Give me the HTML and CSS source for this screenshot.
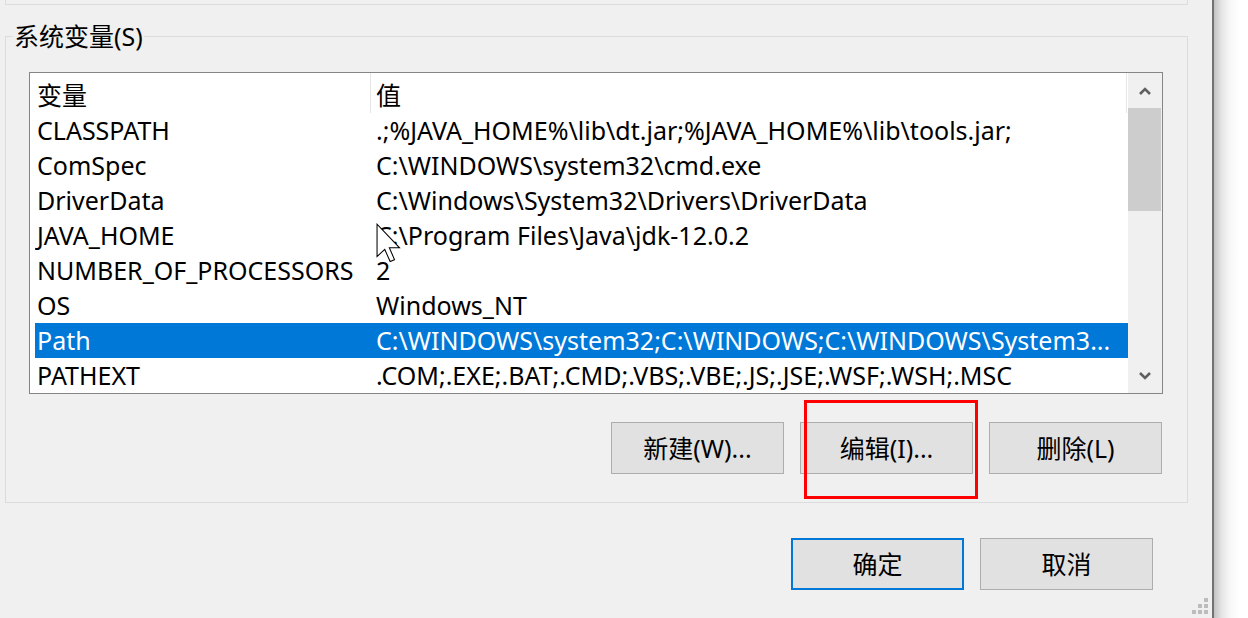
FILE: index.html
```html
<!DOCTYPE html>
<html lang="zh-CN">
<head>
<meta charset="utf-8">
<title>系统变量</title>
<link rel="stylesheet" href="styles.css">
</head>
<body>
<div class="window">
  <div class="dialog">
    <div class="prev-group"></div>
    <fieldset class="group">
      <legend class="group-title">系统变量(S)</legend>
      <div class="listview">
        <div class="list-main">
          <div class="lv-header">
            <div class="hcell hcell-name">变量</div>
            <div class="hcell hcell-value">值</div>
          </div>
          <div class="row"><div class="cell-name">CLASSPATH</div><div class="cell-value">.;%JAVA_HOME%\lib\dt.jar;%JAVA_HOME%\lib\tools.jar;</div></div>
          <div class="row"><div class="cell-name">ComSpec</div><div class="cell-value">C:\WINDOWS\system32\cmd.exe</div></div>
          <div class="row"><div class="cell-name">DriverData</div><div class="cell-value">C:\Windows\System32\Drivers\DriverData</div></div>
          <div class="row"><div class="cell-name">JAVA_HOME</div><div class="cell-value">C:\Program Files\Java\jdk-12.0.2</div></div>
          <div class="row"><div class="cell-name">NUMBER_OF_PROCESSORS</div><div class="cell-value">2</div></div>
          <div class="row"><div class="cell-name">OS</div><div class="cell-value">Windows_NT</div></div>
          <div class="row row-selected"><div class="cell-name">Path</div><div class="cell-value">C:\WINDOWS\system32;C:\WINDOWS;C:\WINDOWS\System3...</div></div>
          <div class="row"><div class="cell-name">PATHEXT</div><div class="cell-value">.COM;.EXE;.BAT;.CMD;.VBS;.VBE;.JS;.JSE;.WSF;.WSH;.MSC</div></div>
        </div>
        <div class="scrollbar">
          <div class="sb-btn">
            <svg width="12" height="8" viewBox="0 0 12 8"><polyline points="1,7 6,2 11,7" fill="none" stroke="#606060" stroke-width="2.6"/></svg>
          </div>
          <div class="sb-thumb"></div>
          <div class="sb-track"></div>
          <div class="sb-btn">
            <svg width="12" height="8" viewBox="0 0 12 8"><polyline points="1,1 6,6 11,1" fill="none" stroke="#606060" stroke-width="2.6"/></svg>
          </div>
        </div>
      </div>
      <div class="btn-row">
        <button class="btn">新建(W)...</button>
        <div class="marked"><button class="btn">编辑(I)...</button></div>
        <button class="btn">删除(L)</button>
      </div>
    </fieldset>
    <div class="dlg-buttons">
      <button class="btn btn-default">确定</button>
      <button class="btn">取消</button>
    </div>
    <svg class="grip" width="17" height="17" viewBox="0 0 17 17">
      <rect x="12" y="0" width="4" height="4" fill="#bcbcbc"/>
      <rect x="6" y="6" width="4" height="4" fill="#bcbcbc"/>
      <rect x="12" y="6" width="4" height="4" fill="#bcbcbc"/>
      <rect x="0" y="12" width="4" height="4" fill="#bcbcbc"/>
      <rect x="6" y="12" width="4" height="4" fill="#bcbcbc"/>
      <rect x="12" y="12" width="4" height="4" fill="#bcbcbc"/>
    </svg>
  </div>
  <div class="edge"></div>
  <div class="shadow"></div>
</div>
<svg class="cursor" width="25" height="40" viewBox="0 0 12 19">
  <path d="M0.5 0.5 L0.5 16 L4.2 12.6 L6.8 18.4 L8.9 17.5 L6.4 11.8 L11.3 11.8 Z" fill="#fff" stroke="#000" stroke-width="0.5" stroke-linejoin="miter"/>
</svg>
</body>
</html>
```

FILE: styles.css
```css
html, body {
  margin: 0;
  padding: 0;
}

body {
  background: #ffffff;
  font-family: "Noto Sans", "Noto Sans CJK SC", sans-serif;
  font-size: 25px;
  color: #000;
  position: relative;
  width: 1248px;
  height: 618px;
  overflow: hidden;
}

.window {
  display: flex;
  height: 618px;
}

.dialog {
  width: 1212px;
  flex: none;
  background: #f0f0f0;
  position: relative;
}

.edge {
  width: 2px;
  flex: none;
  background: #727272;
}

.shadow {
  flex: 1;
  background: linear-gradient(to right, #c2c2c2 0px, #e6e6e6 8px, #f7f7f7 16px, #ffffff 26px);
}

.prev-group {
  margin-left: 5px;
  width: 1183px;
  height: 5px;
  box-sizing: border-box;
  border: 1px solid #dcdcdc;
  border-top: none;
}

.group {
  margin: 17px 0 0 5px;
  width: 1183px;
  box-sizing: border-box;
  border: 1px solid #dcdcdc;
  padding: 0 24px 28px 23px;
  min-inline-size: auto;
}

.group-title {
  margin-left: -16px;
  padding: 0 1px;
  line-height: 28px;
  height: 28px;
  white-space: nowrap;
}

.listview {
  margin-top: 22px;
  width: 1134px;
  height: 322px;
  box-sizing: border-box;
  border: 1px solid #858585;
  background: #fff;
  display: flex;
}

.list-main {
  flex: 1;
  min-width: 0;
  display: flex;
  flex-direction: column;
}

.lv-header {
  height: 40px;
  display: flex;
}

.hcell {
  height: 40px;
  line-height: 40px;
  padding-top: 2px;
  box-sizing: border-box;
  border-right: 1px solid #e5e5e5;
  white-space: nowrap;
}

.hcell-name {
  width: 341px;
  padding-left: 7px;
}

.hcell-value {
  width: 756px;
  padding-left: 5px;
}

.row {
  display: flex;
  height: 35px;
  line-height: 35px;
  margin-left: 5px;
  width: 1093px;
  white-space: nowrap;
}

.cell-name {
  width: 335px;
  flex: none;
  box-sizing: border-box;
  padding-left: 2px;
  overflow: hidden;
}

.cell-value {
  flex: 1;
  min-width: 0;
  padding-left: 6px;
  overflow: hidden;
}

.row-selected {
  background: #0078d7;
  color: #fff;
}

.scrollbar {
  width: 34px;
  flex: none;
  background: #f0f0f0;
  display: flex;
  flex-direction: column;
}

.sb-btn {
  height: 35px;
  flex: none;
  display: flex;
  align-items: center;
  justify-content: center;
  padding-right: 1px;
}

.sb-thumb {
  height: 103px;
  flex: none;
  background: #cdcdcd;
  margin-right: 1px;
}

.sb-track {
  flex: 1;
}

.btn-row {
  margin-top: 28px;
  margin-right: 1px;
  display: flex;
  justify-content: flex-end;
  gap: 16px;
}

.btn {
  width: 173px;
  height: 52px;
  box-sizing: border-box;
  border: 1px solid #adadad;
  background: #e1e1e1;
  font-family: "Noto Sans", "Noto Sans CJK SC", sans-serif;
  font-size: 25px;
  color: #000;
  padding: 0;
  margin: 0;
  line-height: 1;
}

.btn-default {
  border: 2px solid #0078d7;
}

.marked {
  position: relative;
  display: flex;
}

.marked::after {
  content: "";
  position: absolute;
  left: 4px;
  top: -22px;
  width: 174px;
  height: 99px;
  box-sizing: border-box;
  border: 3px solid #ff0000;
  pointer-events: none;
}

.dlg-buttons {
  margin-top: 35px;
  padding-right: 59px;
  display: flex;
  justify-content: flex-end;
  gap: 16px;
}

.grip {
  position: absolute;
  right: 3px;
  bottom: 3px;
}

.cursor {
  position: absolute;
  left: 376px;
  top: 223px;
}
```
